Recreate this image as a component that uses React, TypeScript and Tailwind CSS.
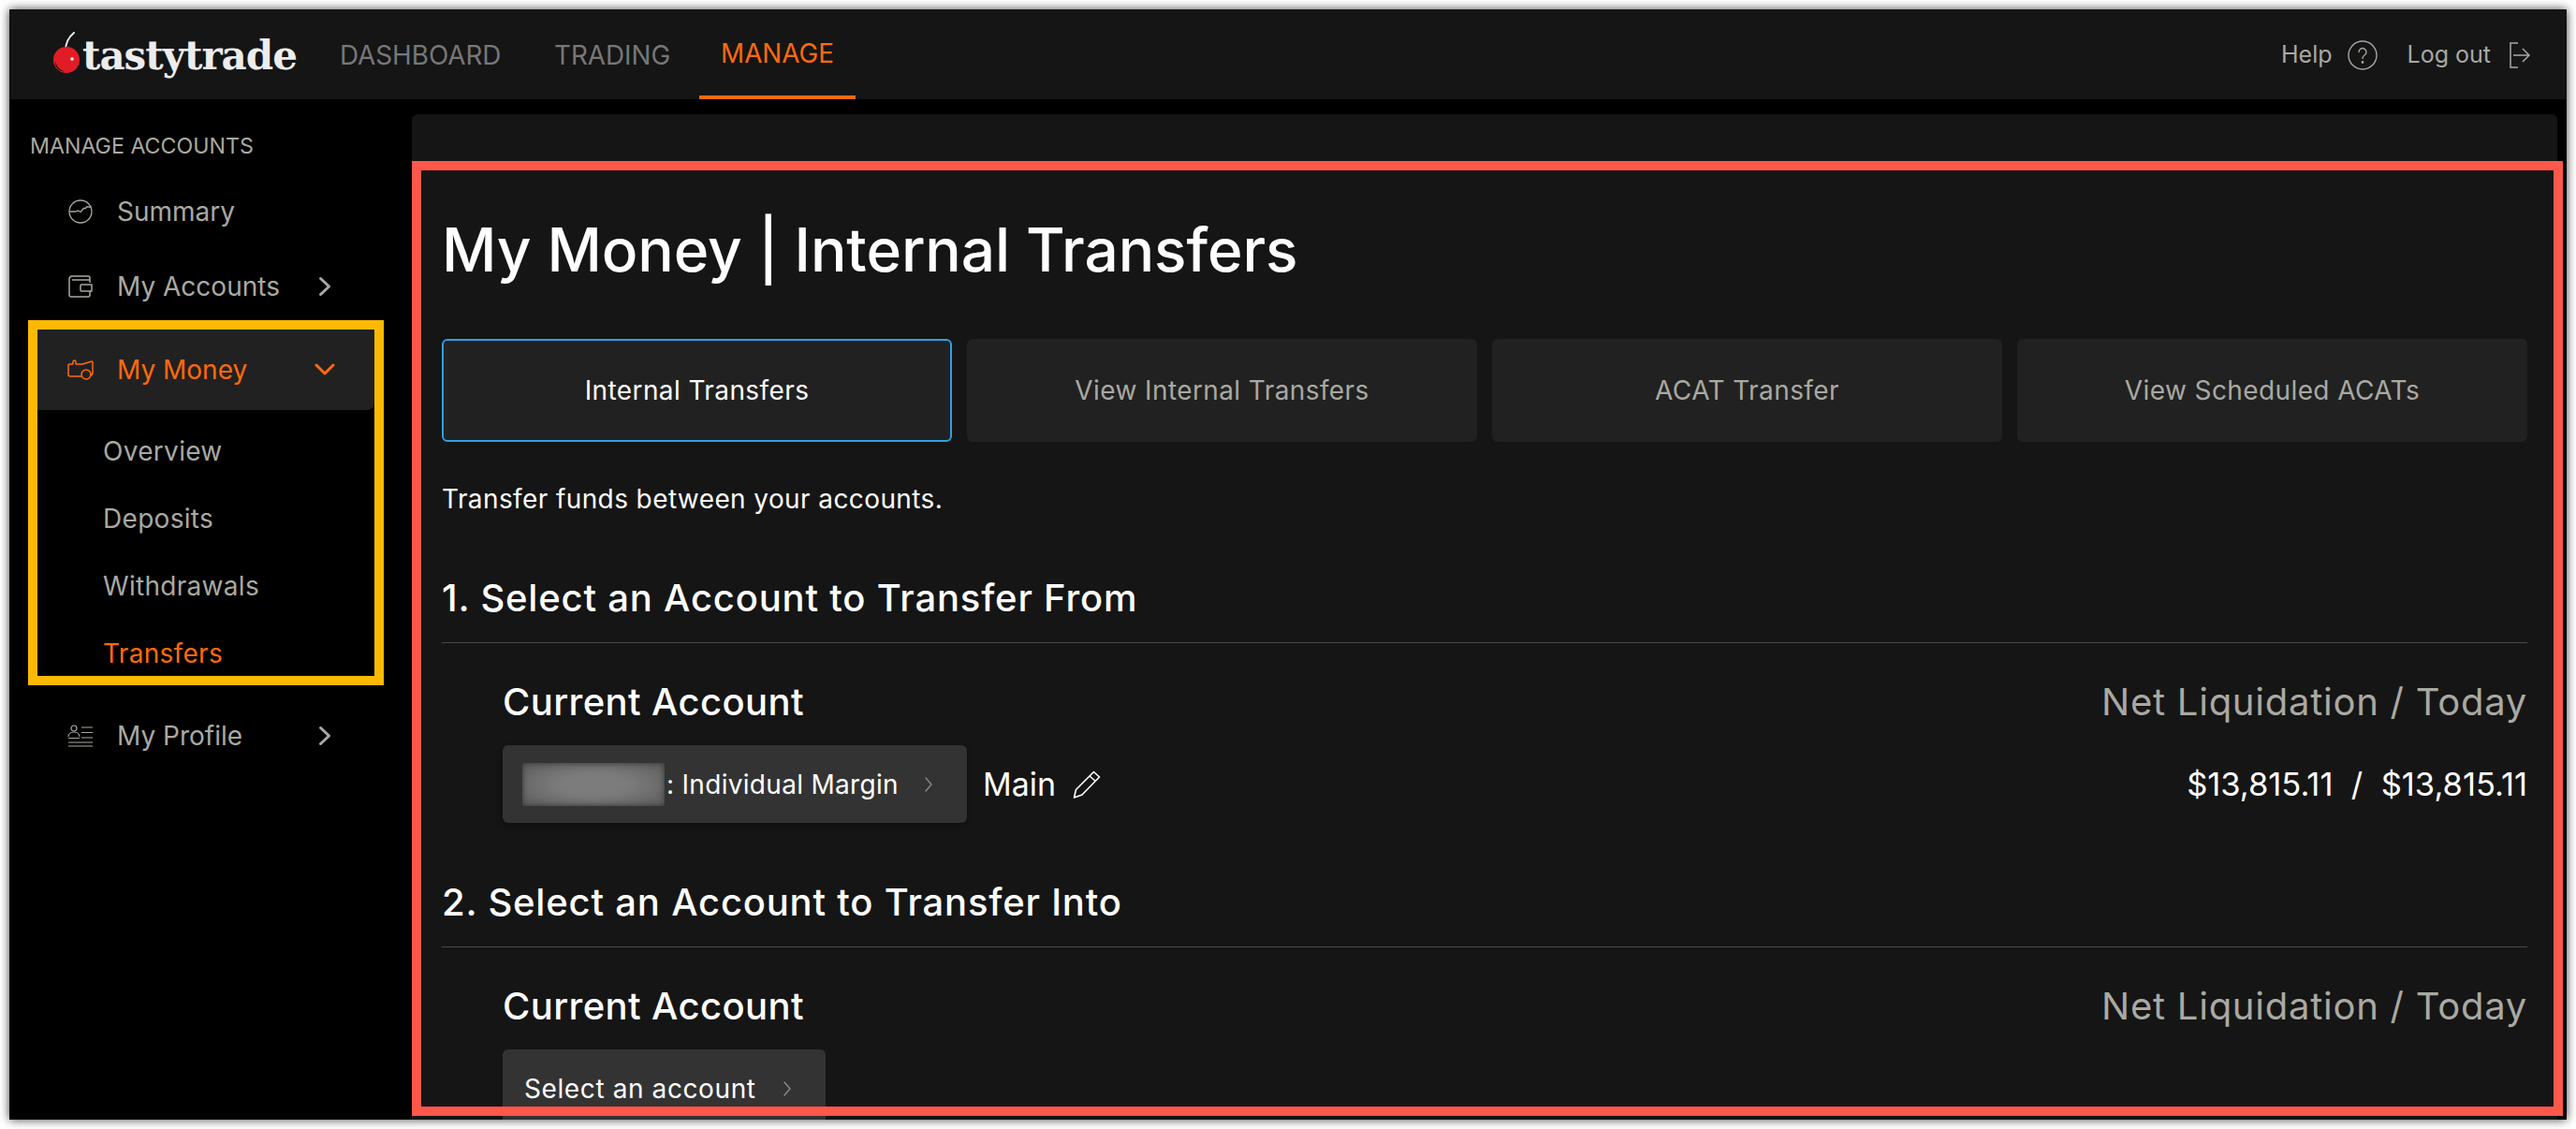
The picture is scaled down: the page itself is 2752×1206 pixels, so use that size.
const font = "font-['Inter','Liberation_Sans',sans-serif]";

function ChevronRight({ className }: { className?: string }) {
  return (
    <svg viewBox="0 0 14 22" className={className} fill="none" stroke="currentColor" strokeLinecap="round" strokeLinejoin="round">
      <path d="M2.500 2.500l9 8.500-9 8.500" strokeWidth="3" />
    </svg>
  );
}

function ThinChevron() {
  return (
    <svg viewBox="0 0 10 18" className="w-[10px] h-[18px] text-[#8a8a85]" fill="none" stroke="currentColor" strokeLinecap="round" strokeLinejoin="round">
      <path d="M2 2l6 7-6 7" strokeWidth="1.4" />
    </svg>
  );
}

function SummaryIcon() {
  return (
    <svg viewBox="0 0 26 26" className="w-[26px] h-[26px]" fill="none" stroke="currentColor" strokeWidth="1.3">
      <circle cx="13" cy="13" r="12" />
      <path d="M1.500 13h6l3-1 2.500 1.500 3.500-4 2 0 1-1.500h5" />
    </svg>
  );
}

function WalletIcon() {
  return (
    <svg viewBox="0 0 26 24" className="w-[26px] h-[24px]" fill="none" stroke="currentColor" strokeWidth="1.5" strokeLinejoin="round">
      <path d="M23 8V3a2 2 0 0 0-2-2H4a3 3 0 0 0-3 3v17a2 2 0 0 0 2 2h18a2 2 0 0 0 2-2v-4" />
      <path d="M4 5h19" />
      <path d="M14 10h11v7H14a1 1 0 0 1-1-1v-5a1 1 0 0 1 1-1z" />
    </svg>
  );
}

function MoneyIcon() {
  return (
    <svg viewBox="0 0 28 22" className="w-[28px] h-[22px]" fill="none" stroke="currentColor" strokeWidth="1.5" strokeLinejoin="round">
      <path d="M15 18H3a2 2 0 0 1-2-2V6a1 1 0 0 1 1-1h4" />
      <path d="M6 5V2.500a1.500 1.500 0 0 1 3 0V5h7l10-3a1 1 0 0 1 1 1v11c0 1.500-.8 3-3 3.500" />
      <circle cx="20" cy="16" r="5" />
    </svg>
  );
}

function ProfileIcon() {
  return (
    <svg viewBox="0 0 28 24" className="w-[28px] h-[24px]" fill="none" stroke="currentColor" strokeWidth="1.200">
      <circle cx="7" cy="4" r="3" />
      <path d="M1 13c0-3 2.500-5 6-5s6 2 6 5" />
      <path d="M1 14.500h12M15 3h12M15 8.500h12M15 14h12M1 19h26M1 23h26" />
    </svg>
  );
}

function NavItem({ icon, label, children }: { icon: React.ReactNode; label: string; children?: React.ReactNode }) {
  return (
    <div className="h-[80px] flex items-center pl-[62px] pr-[86px] text-[#a9a9a2]">
      <span className="w-[28px] flex justify-center">{icon}</span>
      <span className="ml-[25px] text-[28px] flex-1">{label}</span>
      {children}
    </div>
  );
}

function SubItem({ label, active }: { label: string; active?: boolean }) {
  return (
    <div className={`h-[72px] flex items-center pl-[100px] text-[28px] tracking-[0.3px] ${active ? "text-[#ff6a0d]" : "text-[#a9a9a2]"}`}>
      {label}
    </div>
  );
}

function Tab({ label, active }: { label: string; active?: boolean }) {
  return (
    <div className={`h-[110px] rounded-[6px] bg-[#212121] flex items-center justify-center text-[28px] tracking-[0.4px] ${active ? "border-2 border-[#2f9fe6] text-white" : "text-[#a9a9a2]"}`}>
      {label}
    </div>
  );
}

function SectionTitle({ children }: { children: React.ReactNode }) {
  return (
    <div className="border-b border-[#4a4a4a] h-[73px] text-[40px] font-medium tracking-[0.8px] text-white flex items-start leading-[50px]">
      {children}
    </div>
  );
}

function AccountHeader() {
  return (
    <div className="flex justify-between items-center pl-[65px] text-[40px] leading-[50px] mt-[38px]">
      <span className="text-white font-medium tracking-[0.4px]">Current Account</span>
      <span className="text-[#a9a9a2] tracking-[0.75px]">Net Liquidation / Today</span>
    </div>
  );
}

export default function App() {
  return (
    <div className={`w-[2752px] h-[1206px] bg-white p-[10px] overflow-hidden ${font}`}>
      <div className="relative w-full h-[1186px] bg-black shadow-[0_0_10px_rgba(0,0,0,0.75)] overflow-hidden flex flex-col">
        <header className="h-[96px] bg-[#151515] flex items-stretch shrink-0">
          <div className="relative w-[353px] pl-[46px] pt-[24px] flex">
            <svg viewBox="0 0 30 44" className="w-[30px] h-[44px] shrink-0">
              <path d="M14 20c0-8 3-14 9-19" fill="none" stroke="#e8e8e8" strokeWidth="2" strokeLinecap="round" />
              <circle cx="15" cy="30" r="14" fill="#e21c26" />
              <path d="M3 31c1 6 5 10 10 11-5 1-11-4-10-11z" fill="#151515" />
              <circle cx="21" cy="29" r="1.800" fill="#f2f2f2" />
            </svg>
            <span className="font-['DejaVu_Serif',serif] font-bold text-[42px] leading-[40px] text-[#ececec] ml-[2px] mt-[6px] tracking-[-1px]">tastytrade</span>
          </div>
          <nav className="flex items-stretch text-[27.8px] pt-[4px]">
            <a className="flex items-center text-[#777] w-[229px]">DASHBOARD</a>
            <a className="flex items-center text-[#777] w-[155px]">TRADING</a>
            <a className="flex items-center justify-center text-[#ff6a0d] w-[167px] border-b-4 border-[#ff6a0d]">MANAGE</a>
          </nav>
          <div className="ml-auto flex items-center pr-[39px] pt-[2px] text-[25px] text-[#a9a9a2]">
            <span>Help</span>
            <svg viewBox="0 0 32 32" className="w-[32px] h-[32px] ml-[16px]" fill="none" stroke="currentColor" strokeWidth="1.400" strokeLinecap="round">
              <circle cx="16" cy="16" r="15" />
              <path d="M12 12.500a4 4 0 1 1 6 3.500c-1.500.8-2 1.500-2 3.500" />
              <circle cx="16" cy="23.500" r=".7" />
            </svg>
            <span className="ml-[32px]">Log out</span>
            <svg viewBox="0 0 22 28" className="w-[22px] h-[28px] ml-[20px]" fill="none" stroke="currentColor" strokeWidth="1.500">
              <path d="M9 1H1v26h8" />
              <path d="M4 14h17M14 7l7 7-7 7" />
            </svg>
          </div>
        </header>
        <div className="flex flex-1 min-h-0">
          <aside className="w-[430px] shrink-0 pt-[34px]">
            <div className="pl-[22px] text-[23.2px] leading-[32px] text-[#a9a9a2]">MANAGE ACCOUNTS</div>
            <div className="mt-[14px]">
              <NavItem icon={<SummaryIcon />} label="Summary" />
              <NavItem icon={<WalletIcon />} label="My Accounts">
                <ChevronRight className="w-[14px] h-[22px]" />
              </NavItem>
              <div className="mt-[6px] mr-[40px]">
                <div className="ml-[30px] h-[86px] rounded-br-[8px] bg-[#212121] flex items-center pl-[32px] pr-[42px] text-[#ff6a0d]">
                  <span className="w-[28px] flex justify-center"><MoneyIcon /></span>
                  <span className="ml-[25px] text-[28px] flex-1">My Money</span>
                  <svg viewBox="0 0 22 14" className="w-[22px] h-[14px]" fill="none" stroke="currentColor" strokeWidth="3" strokeLinecap="round" strokeLinejoin="round">
                    <path d="M2 2l9 9 9-9" />
                  </svg>
                </div>
                <div className="pt-[8px]">
                  <SubItem label="Overview" />
                  <SubItem label="Deposits" />
                  <SubItem label="Withdrawals" />
                  <SubItem label="Transfers" active />
                </div>
              </div>
              <div className="mt-[12px]">
                <NavItem icon={<ProfileIcon />} label="My Profile">
                  <ChevronRight className="w-[14px] h-[22px]" />
                </NavItem>
              </div>
            </div>
          </aside>
          <main className="flex-1 mr-[10px] mt-[16px] rounded-t-[6px] bg-[#151515] pt-[60px] pl-[32px] pr-[32px] min-w-0">
            <h1 className="text-[64px] leading-[80px] mt-[45px] text-white font-medium tracking-[-0.1px]">My Money | Internal Transfers</h1>
            <div className="grid grid-cols-4 gap-[16px] mt-[55px]">
              <Tab label="Internal Transfers" active />
              <Tab label="View Internal Transfers" />
              <Tab label="ACAT Transfer" />
              <Tab label="View Scheduled ACATs" />
            </div>
            <p className="text-[28px] tracking-[0.4px] leading-[40px] mt-[41px] text-white">Transfer funds between your accounts.</p>
            <div className="mt-[61px]">
              <SectionTitle>1. Select an Account to Transfer From</SectionTitle>
            </div>
            <AccountHeader />
            <div className="flex items-center pl-[65px] mt-[21px]">
              <div className="w-[496px] h-[83px] rounded-[6px] bg-[#333] shadow-[0_2px_6px_rgba(0,0,0,0.4)] flex items-center pl-[21px] pr-[36px] text-[28px] tracking-[0.3px] text-white">
                <span className="w-[152px] h-[46px] overflow-hidden shrink-0">
                  <span className="block w-full h-full bg-[radial-gradient(ellipse_at_center,#7c7c7c_35%,#5a5a5a_100%)] blur-[3px]" />
                </span>
                <span className="ml-[2px] flex-1">: Individual Margin</span>
                <ThinChevron />
              </div>
              <span className="ml-[17px] text-[34px] text-white">Main</span>
              <svg viewBox="0 0 30 30" className="w-[30px] h-[30px] ml-[18px] text-white" fill="none" stroke="currentColor" strokeWidth="1.600" strokeLinejoin="round">
                <path d="M22.500 1.500l6 5.500L10 26l-8.500 3 2-8.500zM18 6l6.500 5.500" />
              </svg>
              <span className="ml-auto text-[34.5px] text-white whitespace-pre">$13,815.11  /  $13,815.11</span>
            </div>
            <div className="mt-[60px]">
              <SectionTitle>2. Select an Account to Transfer Into</SectionTitle>
            </div>
            <AccountHeader />
            <div className="ml-[65px] mt-[21px] w-[345px] h-[90px] rounded-t-[6px] bg-[#333] flex items-center pl-[23px] text-[28px] tracking-[0.6px] text-white pb-[6px]">
              <span>Select an account</span>
              <span className="ml-[28px] flex"><ThinChevron /></span>
            </div>
          </main>
        </div>
        {/* annotation boxes */}
        <div className="absolute left-[20px] top-[332px] w-[380px] h-[390px] border-[10px] border-[#fdb900] pointer-events-none" />
        <div className="absolute left-[430px] top-[162px] w-[2298px] h-[1020px] border-[10px] border-[#ff584a] pointer-events-none" />
      </div>
    </div>
  );
}
